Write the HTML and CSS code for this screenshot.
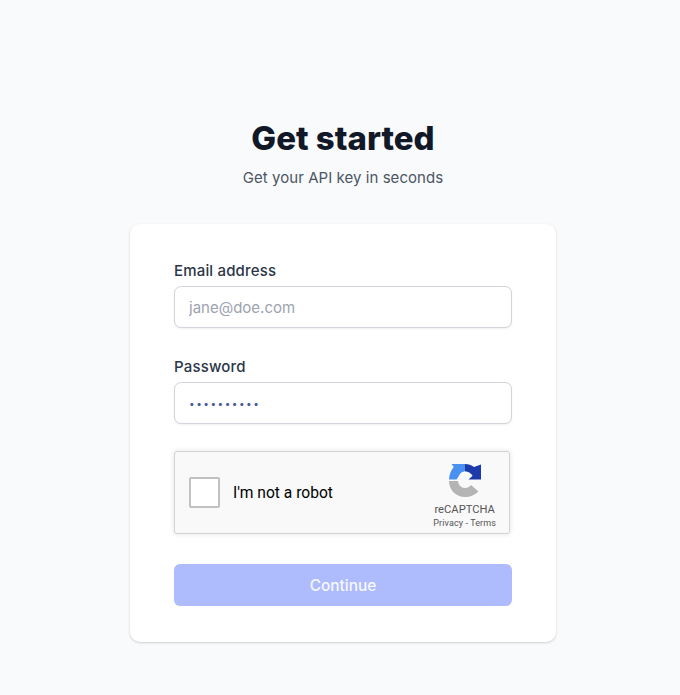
FILE: index.html
```html
<!DOCTYPE html>
<html lang="en">
<head>
<meta charset="utf-8">
<title>Get started</title>
<link rel="stylesheet" href="styles.css">
</head>
<body>
<main class="page">
  <h1 class="title">Get started</h1>
  <p class="subtitle">Get your API key in seconds</p>
  <form class="card">
    <div class="field field-email">
      <label class="label" for="email">Email address</label>
      <input class="input" id="email" type="email" placeholder="jane@doe.com">
    </div>
    <div class="field">
      <label class="label" for="password">Password</label>
      <div class="input password" id="password">••••••••••</div>
    </div>
    <div class="captcha">
      <span class="captcha-box"></span>
      <span class="captcha-text">I'm not a robot</span>
      <div class="captcha-brand">
        <svg class="captcha-logo" viewBox="0 0 36 36" width="36" height="36" aria-hidden="true">
          <path fill="#b4b4b4" d="M1 18H10C10.500 22 13 25 17 25C19.500 25 21.500 24 23 22L30.500 28.500C27 32 22.500 34 17 34C8 34 1 27 1 18z"/>
          <path fill="#4a90f0" d="M1 16.500C1.300 11.500 3 7 5.800 4L3.500 1H17V8.300C14.500 8.800 13 9.800 12 11L8.600 16.500z"/>
          <path fill="#1c3aa9" d="M17 1C20.500 1 23.500 2.200 26 4L33 1.500V16.500H20.500L24.600 12.800C23 10 20 8.500 17 8.300z"/>
        </svg>
        <span class="captcha-name">reCAPTCHA</span>
        <span class="captcha-links">Privacy - Terms</span>
      </div>
    </div>
    <button class="submit" type="button">Continue</button>
  </form>
</main>
</body>
</html>
```
FILE: styles.css
```css
* { box-sizing: border-box; }
html, body { margin: 0; padding: 0; }
body {
  background: #f9fafb;
  font-family: Inter, "Liberation Sans", sans-serif;
  color: #111827;
}
.page {
  height: 695px;
  padding-top: 118px;
  padding-left: 6px;
  display: flex;
  flex-direction: column;
  align-items: center;
}
.title {
  margin: 0;
  font-size: 33px;
  line-height: 40px;
  font-weight: 800;
  color: #111827;
}
.subtitle {
  margin: 10px 0 0;
  font-size: 15px;
  line-height: 20px;
  letter-spacing: .05px;
  color: #4b5563;
}
.card {
  width: 426px;
  height: 418px;
  margin-top: 36px;
  padding: 36px 44px 36px;
  background: #fff;
  border-radius: 10px;
  box-shadow: 0 1px 3px rgba(0,0,0,.12), 0 1px 2px rgba(0,0,0,.06);
  display: flex;
  flex-direction: column;
}
.field { display: flex; flex-direction: column; margin-bottom: 27px; }
.field-email { margin-bottom: 28px; }
.label {
  font-size: 15px;
  line-height: 21px;
  font-weight: 450;
  letter-spacing: .17px;
  color: #2b3648;
  margin-bottom: 5px;
}
.input {
  width: 338px;
  height: 42px;
  padding: 0 14px;
  border: 1px solid #d1d5db;
  border-radius: 7px;
  background: #fff;
  font: 400 15px/38px Inter, "Liberation Sans", sans-serif;
  box-shadow: 0 1px 2px rgba(0,0,0,.06);
  outline: none;
}
.input::placeholder { color: #9ca3af; opacity: 1; }
.password {
  color: #4a5a9c;
  font-size: 10px;
  line-height: 40px;
  letter-spacing: 1.5px;
}
.captcha {
  width: 336px;
  height: 84px;
  display: flex;
  align-items: center;
  padding: 0 13px 0 14px;
  background: #f9f9f9;
  border: 1px solid #d3d3d3;
  border-radius: 3px;
  box-shadow: 0 0 4px 1px rgba(0,0,0,.08);
  font-family: Roboto, "Liberation Sans", sans-serif;
}
.captcha-box {
  width: 31px;
  height: 31px;
  background: #fff;
  border: 2px solid #c1c1c1;
  border-radius: 2px;
}
.captcha-text {
  margin-left: 13px;
  margin-top: 1px;
  font-size: 15.6px;
  color: #000;
}
.captcha-brand {
  margin-left: auto;
  display: flex;
  flex-direction: column;
  align-items: center;
  padding-top: 8px;
}
.captcha-logo { display: block; margin-bottom: 4px; margin-left: 3px; }
.captcha-name { font-size: 11.2px; line-height: 14px; color: #555; }
.captcha-links { font-size: 9px; line-height: 13px; letter-spacing: .1px; color: #555; }
.submit {
  width: 338px;
  height: 42px;
  margin-top: 30px;
  border: 0;
  border-radius: 6px;
  background: #aebcfe;
  color: #f7f8ff;
  font: 500 15.4px/42px Inter, "Liberation Sans", sans-serif;
}
```
